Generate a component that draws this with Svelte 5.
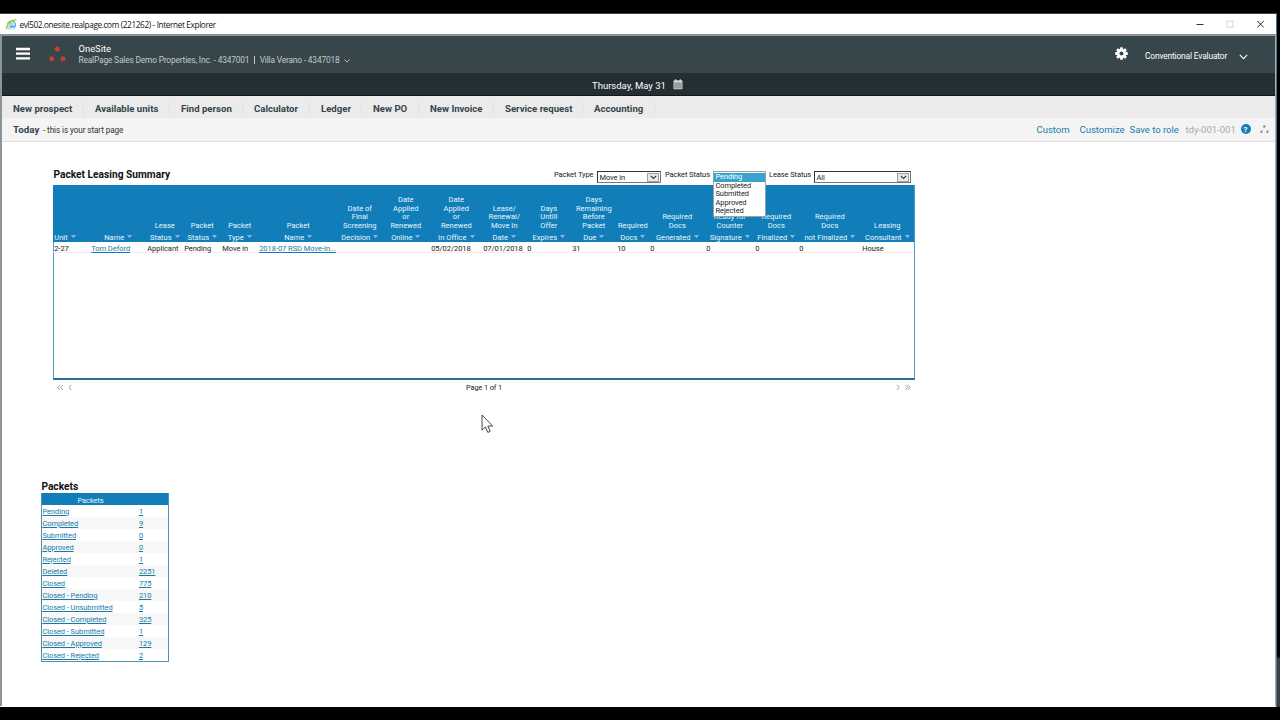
<script>
  const nav = [
    ['New prospect', 82], ['Available units', 86], ['Find person', 73], ['Calculator', 67],
    ['Ledger', 52], ['New PO', 57], ['New Invoice', 75], ['Service request', 89], ['Accounting', 72]
  ];
  const columns = [
    { w: 37, head: ['Unit'], cell: '2-27', left: true },
    { w: 56, head: ['Name'], cell: 'Tom Deford', link: true },
    { w: 37, head: ['Lease', 'Status'], cell: 'Applicant' },
    { w: 38, head: ['Packet', 'Status'], cell: 'Pending' },
    { w: 37, head: ['Packet', 'Type'], cell: 'Move in' },
    { w: 80, head: ['Packet', 'Name'], cell: '2018-07 RSD Move-In...', link: true },
    { w: 43, head: ['Date of', 'Final', 'Screening', 'Decision'], cell: '' },
    { w: 49, head: ['Date', 'Applied', 'or', 'Renewed', 'Online'], cell: '' },
    { w: 52, head: ['Date', 'Applied', 'or', 'Renewed', 'In Office'], cell: '05/02/2018' },
    { w: 44, head: ['Lease/', 'Renewal/', 'Move In', 'Date'], cell: '07/01/2018' },
    { w: 45, head: ['Days', 'Untill', 'Offer', 'Expires'], cell: '0' },
    { w: 45, head: ['Days', 'Remaining', 'Before', 'Packet', 'Due'], cell: '31' },
    { w: 33, head: ['Required', 'Docs'], cell: '10' },
    { w: 56, head: ['Required', 'Docs', 'Generated'], cell: '0' },
    { w: 49, head: ['Ready for', 'Counter', 'Signature'], cell: '0' },
    { w: 44, head: ['Required', 'Docs', 'Finalized'], cell: '0' },
    { w: 63, head: ['Required', 'Docs', 'not Finalized'], cell: '0' },
    { w: 52, head: ['Leasing', 'Consultant'], cell: 'House' }
  ];
  const template = columns.map((c) => c.w + 'px').join(' ');
  const statuses = ['Pending', 'Completed', 'Submitted', 'Approved', 'Rejected'];
  const packets = [
    ['Pending', 1], ['Completed', 9], ['Submitted', 0], ['Approved', 0], ['Rejected', 1],
    ['Deleted', 2251], ['Closed', 775], ['Closed - Pending', 210], ['Closed - Unsubmitted', 5],
    ['Closed - Completed', 325], ['Closed - Submitted', 1], ['Closed - Approved', 129], ['Closed - Rejected', 2]
  ];
</script>

<div class="screen">
  <div class="window">
    <div class="titlebar">
      <svg class="ie" width="11" height="11" viewBox="0 0 11 11">
        <circle cx="5.5" cy="6" r="4.6" fill="#5fb4d6" />
        <path d="M3 6h5.4M8 8.2A3 3 0 1 1 8.4 6" fill="none" stroke="#e9f8fc" stroke-width="1.2" />
        <path d="M1 10.2C-.5 7 5 .3 10.3 1" fill="none" stroke="#b5c93e" stroke-width="1.5" />
      </svg>
      <span class="title">evl502.onesite.realpage.com (221262) - Internet Explorer</span>
      <svg class="controls" width="70" height="10" viewBox="0 0 70 10">
        <path d="M.5 5.5h7" stroke="#333" />
        <rect x="31" y="2.2" width="6" height="6" fill="none" stroke="#d5d5d5" />
        <path d="M61.3 2l6.4 6.4M67.7 2l-6.4 6.4" stroke="#222" stroke-width="1" />
      </svg>
    </div>

    <div class="page">
      <header>
        <svg class="burger" width="14" height="13" viewBox="0 0 14 13">
          <path d="M0 2h14M0 6.7h14M0 11.4h14" stroke="#fff" stroke-width="2.300" />
        </svg>
        <svg class="logo" width="17" height="17" viewBox="0 0 17 17" fill="#c8402c">
          <circle cx="8.300" cy="3" r="2.500" /><circle cx="2.700" cy="12.700" r="2.500" /><circle cx="14" cy="12.700" r="2.500" />
        </svg>
        <div class="brand">
          <div class="product">OneSite</div>
          <div class="property">
            <span class="company">RealPage Sales Demo Properties, Inc. - 4347001</span>
            <i></i>
            <span class="site">Villa Verano - 4347018</span>
            <svg width="6" height="4" viewBox="0 0 6 4"><path d="M.5.5L3 3 5.5.5" fill="none" stroke="#c2cacc" stroke-width=".9" /></svg>
          </div>
        </div>
        <svg class="gear" width="13" height="13" viewBox="-6.5 -6.5 13 13">
          <g fill="#fff">
            <circle r="4.700" />
            {#each [0, 45, 90, 135] as a}
              <rect x="-1.400" y="-6.300" width="2.800" height="12.600" rx=".5" transform="rotate({a})" />
            {/each}
          </g>
          <circle r="2" fill="#36464a" />
        </svg>
        <span class="user">Conventional Evaluator</span>
        <svg class="chev" width="9" height="6" viewBox="0 0 9 6"><path d="M.8.8l3.7 3.900L8.2.8" fill="none" stroke="#fff" stroke-width="1.100" /></svg>
      </header>

      <div class="datebar">
        <span>Thursday, May 31</span>
        <svg width="10" height="11" viewBox="0 0 10 11">
          <rect x=".5" y="1.300" width="9" height="9" rx=".8" fill="#d0d3d3" />
          <path d="M2.700.3v2.200M7.300.3v2.200" stroke="#ddd" stroke-width="1.200" />
          <rect x="1.300" y="3.600" width="7.400" height="5.800" fill="#909496" />
          <path d="M1 5.500h8M1 7.500h8M3 3.600v6M5 3.600v6M7 3.600v6" stroke="#a9adae" stroke-width=".5" />
        </svg>
      </div>

      <nav>
        {#each nav as [label, w]}
          <a style="width:{w}px"><span>{label}</span></a>
        {/each}
      </nav>

      <div class="subbar">
        <b>Today</b><span class="sub">- this is your start page</span>
        <div class="links">
          <a class="custom">Custom</a><a class="customize">Customize</a><a class="role">Save to role</a>
          <span class="code">tdy-001-001</span>
          <span class="help">?</span>
          <svg width="9" height="9" viewBox="0 0 9 9" fill="#8d8d8d"><circle cx="4.300" cy="1.500" r="1.200" /><circle cx="1.400" cy="6.800" r="1.200" /><circle cx="7.400" cy="6.800" r="1.200" /></svg>
        </div>
      </div>

      <main>
        <section class="summary">
          <div class="top">
            <h2>Packet Leasing Summary</h2>
            <span class="flabel l1">Packet Type</span>
            <div class="select s1"><span>Move in</span><i><svg width="7" height="5" viewBox="0 0 7 5"><path d="M.8.8l2.700 2.700L6.200.8" /></svg></i></div>
            <span class="flabel l2">Packet Status</span>
            <div class="slot">
              <ul>
                {#each statuses as s, i}<li class:on={i === 0}>{s}</li>{/each}
              </ul>
            </div>
            <span class="flabel l3">Lease Status</span>
            <div class="select s2"><span>All</span><i><svg width="7" height="5" viewBox="0 0 7 5"><path d="M.8.8l2.700 2.700L6.200.8" /></svg></i></div>
          </div>
          <div class="grid">
            <div class="row head" style="grid-template-columns:{template}">
              {#each columns as c}
                <div class="th" class:left={c.left}>
                  {#each c.head.slice(0, -1) as line}<div>{line}</div>{/each}
                  <div class="last">{c.head.at(-1)}<svg width="5" height="4" viewBox="0 0 5 4"><path d="M0 0h5L2.500 3.300z" fill="#8fb0e4" /></svg></div>
                </div>
              {/each}
            </div>
            <div class="row data" style="grid-template-columns:{template}">
              {#each columns as c}
                <div class="td"><span class:link={c.link}>{c.cell}</span></div>
              {/each}
            </div>
          </div>
          <div class="pager">
            <svg width="17" height="7" viewBox="0 0 17 7"><path d="M3 .8L.8 3.400 3 6M5.800.8L3.600 3.400 5.800 6M14.200.8L12 3.400 14.200 6" /></svg>
            <span>Page 1 of 1</span>
            <svg width="17" height="7" viewBox="0 0 17 7"><path d="M3 .8l2.200 2.600L3 6M11.500.8l2.200 2.600L11.500 6M14 .8l2.200 2.600L14 6" /></svg>
          </div>
        </section>

        <section class="packets">
          <h2>Packets</h2>
          <div class="box">
            <div class="bhead">Packets</div>
            {#each packets as [name, count]}
              <div class="brow"><a>{name}</a><a>{count}</a></div>
            {/each}
          </div>
        </section>
      </main>
    </div>
  </div>
  <svg class="cursor" width="13" height="20" viewBox="0 0 13 20">
    <path d="M1 1v15.200l3.400-3.300 2.400 5.500 2.400-1-2.400-5.300h4.900z" fill="#fff" stroke="#333" stroke-width=".9" />
  </svg>
</div>

<style>
  :global(body) { margin: 0; background: #000; overflow: hidden; }
  .screen { position: relative; box-sizing: border-box; width: 1280px; height: 720px; padding: 13px 3px 13px 0; background: linear-gradient(#000 0 656px, #071011 656px 658px, #443c3b 658px 707px, #000 707px); font-family: Roboto, sans-serif; color: #222; }
  .window { box-sizing: border-box; height: 694px; background: #fff; border-top: 1px solid #34494b; border-right: 1px solid #3f77a3; }
  .titlebar { height: 20px; display: flex; align-items: center; box-sizing: border-box; padding-left: 6px; }
  .title { margin-left: 2.500px; font: 8.2px "Open Sans", sans-serif; letter-spacing: -.35px; color: #111; white-space: nowrap; }
  .controls { margin-left: auto; margin-right: 10px; }
  .page { height: 672px; box-sizing: border-box; border-left: 2px solid #8b9496; border-top: 2px solid #8b9698; border-right: 1px solid #a6b0b2; }
  header { height: 37px; background: #36464a; display: flex; align-items: flex-start; color: #fff; white-space: nowrap; }
  .burger { margin: 11px 0 0 14px; }
  .logo { margin: 10px 0 0 19px; }
  .brand { margin: 7px 0 0 12.500px; }
  .product { font-size: 9.4px; line-height: 12px; height: 12px; }
  .property { display: flex; align-items: center; font-size: 8.3px; letter-spacing: -.14px; line-height: 10px; color: #c2cacc; }
  .property i { width: 1px; height: 8px; background: #c2cacc; margin: 0 5px; }
  .site { margin-left: -.7px; }
  .property svg { margin-left: 4px; margin-top: 1px; }
  .gear { margin: 11px 0 0 auto; }
  .user { margin: 14px 0 0 17px; width: 93px; font-size: 8.4px; letter-spacing: -.15px; line-height: 12px; }
  .chev { margin: 18px 27px 0 1px; }
  .datebar { height: 23px; box-sizing: border-box; border-bottom: 1px solid #10181b; background: #242f33; color: #fff; display: flex; align-items: center; padding-left: 590px; font-size: 9.5px; }
  .datebar span { width: 81px; white-space: nowrap; padding-top: 2px; }
  .datebar svg { margin-top: 1px; }
  nav { height: 22px; background: #ebebeb; display: flex; align-items: center; font-size: 9.6px; font-weight: 700; color: #36444a; }
  nav a { box-sizing: border-box; height: 13px; line-height: 14px; margin-top: 3px; padding-left: 11px; border-right: 1px solid #e0e0e0; white-space: nowrap; }
  .subbar { height: 24px; box-sizing: border-box; border-bottom: 1px solid #ddd; background: #f4f4f4; display: flex; align-items: center; padding-left: 11px; }
  .subbar b { font-size: 9.8px; width: 30px; color: #36444a; font-weight: 700; }
  .sub { font-size: 8.2px; letter-spacing: -.1px; color: #333; }
  .links { margin-left: auto; display: flex; align-items: center; font-size: 9.5px; color: #187db0; white-space: nowrap; padding-right: 6.500px; }
  .custom { width: 43px; } .customize { width: 50px; } .role { width: 56px; }
  .code { width: 55px; color: #aaa; }
  .help { width: 10px; height: 10px; border-radius: 50%; background: #1380b8; color: #fff; font-size: 8px; font-weight: 700; line-height: 11px; text-align: center; margin: -1px 9px 0 0; }
  main { padding: 26px 0 0 39px; }
  .summary { margin-left: 12px; width: 861px; }
  .top { height: 17px; display: flex; align-items: flex-start; white-space: nowrap; }
  h2 { margin: 0; font-size: 10.2px; line-height: 14px; font-weight: 700; color: #111; }
  .top h2 { width: 501px; box-sizing: border-box; padding-left: .5px; }
  .flabel { font-size: 7.6px; letter-spacing: -.14px; line-height: 12px; padding-top: 1px; }
  .l1 { width: 43px; } .l2 { width: 48px; } .l3 { width: 45px; }
  .select { box-sizing: border-box; height: 12px; margin-top: 3px; border: 1px solid #777; border-top-color: #333; border-left-color: #333; display: flex; align-items: center; padding: 0 1px 0 1.500px; font: 7.5px/11px Roboto, sans-serif; letter-spacing: -.1px; background: #fff; }
  .select span { flex: 1; }
  .select i { box-sizing: border-box; width: 12px; height: 9px; border: 1px solid #a0a0a0; background: #e8e8e8; display: flex; align-items: center; justify-content: center; }
  .select path { fill: none; stroke: #333; stroke-width: 1.1; }
  .s1 { width: 64px; margin-right: 4px; } .s2 { width: 97px; }
  .slot { width: 54px; height: 12px; position: relative; margin-right: 2px; }
  ul { position: absolute; z-index: 2; left: 0; top: 3px; width: 53px; height: 46px; box-sizing: border-box; margin: 0; padding: 1px 0 0; list-style: none; background: #fff; border: 1px solid #98a3a8; }
  li { height: 8.55px; line-height: 8.8px; padding-left: 1.500px; font-size: 7.5px; letter-spacing: -.1px; }
  li.on { background: #36a4cc; color: #fff; }
  .grid { box-sizing: border-box; width: 862px; height: 195px; border: 1px solid #4b9ac0; border-bottom: 2px solid #2c6c98; border-top: 0; }
  .row { display: grid; margin-left: -1px; }
  .head { height: 57px; background: #117eb9; color: #e8f6fd; font-size: 7.5px; line-height: 8.7px; width: 861px; }
  .th { display: flex; flex-direction: column; justify-content: flex-end; align-items: center; white-space: nowrap; letter-spacing: .03px; position: relative; top: 1px; left: .3px; }
  .th.left { align-items: flex-start; padding-left: 1px; }
  .last { margin-top: 3.500px; display: flex; align-items: center; }
  .last svg { margin: -3px 0 0 3px; }
  .data { height: 11px; box-sizing: border-box; border-bottom: 1px solid #eee; font-size: 7.5px; line-height: 13px; letter-spacing: -.04px; }
  .td { padding-left: 1.200px; white-space: nowrap; }
  .link { color: #177ba8; text-decoration: underline; }
  .pager { height: 15px; display: flex; align-items: center; justify-content: space-between; font-size: 7.4px; letter-spacing: -.12px; padding: 0 3px 0 4px; }
  .pager path { fill: none; stroke: #888; stroke-width: .8; }
  .packets { margin-top: 84px; padding-left: .4px; }
  .packets h2 { height: 14px; line-height: 16px; }
  .box { box-sizing: border-box; width: 128px; height: 169px; border: 1px solid #4b93ac; border-top: 0; font-size: 7.5px; letter-spacing: -.07px; }
  .bhead { height: 12px; line-height: 16px; box-sizing: border-box; padding-left: 35px; background: #117eb9; color: #e8f6fd; }
  .brow { height: 12px; line-height: 14px; display: grid; grid-template-columns: 96.500px 1fr; color: #177ba8; text-decoration: underline; padding-left: 0; white-space: nowrap; }
  .brow:nth-child(odd) { background: #f7f7f7; }
  .cursor { position: absolute; left: 481px; top: 414px; }
</style>
